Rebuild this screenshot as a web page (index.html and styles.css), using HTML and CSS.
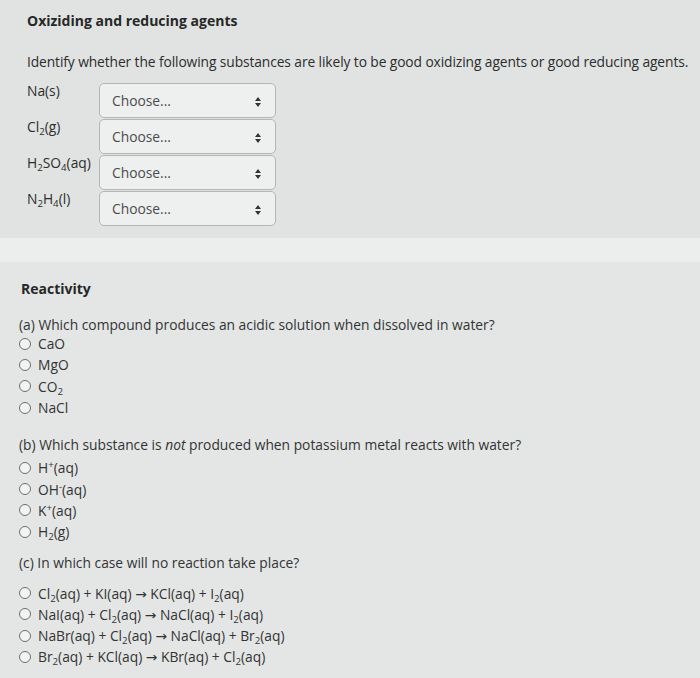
FILE: index.html
```html
<!DOCTYPE html>
<html>
<head>
<meta charset="utf-8">
<link rel="stylesheet" href="styles.css">
</head>
<body>
<section class="panel top">
  <h1 class="title">Oxiziding and reducing agents</h1>
  <p class="intro">Identify whether the following substances are likely to be good oxidizing agents or good reducing agents.</p>
  <div class="rows">
    <div class="row"><span class="label">Na(s)</span><div class="select"><span>Choose...</span><svg class="arr" width="6" height="10" viewBox="0 0 6 10"><path d="M3 0L6 4H0Z M3 10L6 6H0Z" fill="#333"/></svg></div></div>
    <div class="row"><span class="label">Cl<sub>2</sub>(g)</span><div class="select"><span>Choose...</span><svg class="arr" width="6" height="10" viewBox="0 0 6 10"><path d="M3 0L6 4H0Z M3 10L6 6H0Z" fill="#333"/></svg></div></div>
    <div class="row"><span class="label">H<sub>2</sub>SO<sub>4</sub>(aq)</span><div class="select"><span>Choose...</span><svg class="arr" width="6" height="10" viewBox="0 0 6 10"><path d="M3 0L6 4H0Z M3 10L6 6H0Z" fill="#333"/></svg></div></div>
    <div class="row"><span class="label">N<sub>2</sub>H<sub>4</sub>(l)</span><div class="select"><span>Choose...</span><svg class="arr" width="6" height="10" viewBox="0 0 6 10"><path d="M3 0L6 4H0Z M3 10L6 6H0Z" fill="#333"/></svg></div></div>
  </div>
</section>
<section class="panel bottom">
  <h2 class="heading">Reactivity</h2>
  <p class="q qa">(a) Which compound produces an acidic solution when dissolved in water?</p>
  <ul class="opts oa">
    <li><span class="radio"></span><span class="txt">CaO</span></li>
    <li><span class="radio"></span><span class="txt">MgO</span></li>
    <li><span class="radio"></span><span class="txt">CO<sub>2</sub></span></li>
    <li><span class="radio"></span><span class="txt">NaCl</span></li>
  </ul>
  <p class="q qb">(b) Which substance is <em>not</em> produced when potassium metal reacts with water?</p>
  <ul class="opts ob">
    <li><span class="radio"></span><span class="txt">H<sup>+</sup>(aq)</span></li>
    <li><span class="radio"></span><span class="txt">OH<sup>-</sup>(aq)</span></li>
    <li><span class="radio"></span><span class="txt">K<sup>+</sup>(aq)</span></li>
    <li><span class="radio"></span><span class="txt">H<sub>2</sub>(g)</span></li>
  </ul>
  <p class="q qc">(c) In which case will no reaction take place?</p>
  <ul class="opts oc">
    <li><span class="radio"></span><span class="txt">Cl<sub>2</sub>(aq) + KI(aq) &rarr; KCl(aq) + I<sub>2</sub>(aq)</span></li>
    <li><span class="radio"></span><span class="txt">NaI(aq) + Cl<sub>2</sub>(aq) &rarr; NaCl(aq) + I<sub>2</sub>(aq)</span></li>
    <li><span class="radio"></span><span class="txt">NaBr(aq) + Cl<sub>2</sub>(aq) &rarr; NaCl(aq) + Br<sub>2</sub>(aq)</span></li>
    <li><span class="radio"></span><span class="txt">Br<sub>2</sub>(aq) + KCl(aq) &rarr; KBr(aq) + Cl<sub>2</sub>(aq)</span></li>
  </ul>
</section>
</body>
</html>
```
FILE: styles.css
```css
* { box-sizing: border-box; }
html, body { margin: 0; padding: 0; }
body {
  width: 700px;
  height: 678px;
  overflow: hidden;
  background: #eceeed;
  font-family: "Open Sans", "DejaVu Sans", sans-serif;
  font-size: 13.8px;
  color: #2b2d2c;
}
sub, sup { font-size: 0.7em; line-height: 0; }
sub { vertical-align: -0.3em; }
sup { vertical-align: 0.55em; }
.panel { margin: 0; }
.top {
  background: #e0e3e2;
  height: 238px;
  padding: 11px 0 0 27px;
}
.title {
  margin: 0;
  font-size: 14px;
  font-weight: 700;
  line-height: 20px;
  color: #262827;
}
.intro {
  margin: 21px 0 0;
  line-height: 20px;
  letter-spacing: -0.1px;
}
.rows {
  margin-top: 11px;
  display: flex;
  flex-direction: column;
  gap: 1px;
}
.row {
  display: flex;
  align-items: flex-start;
}
.label {
  width: 72px;
  line-height: 12px;
  padding-top: 2px;
}
.select {
  width: 177px;
  height: 35px;
  border: 1px solid #b3b6b5;
  border-radius: 5px;
  background: #eef0ef;
  display: flex;
  align-items: center;
  justify-content: space-between;
  padding: 0 14px 0 12px;
  color: #4a4c4b;
  font-size: 13.8px;
}
.arr { margin-top: 2px; }
.bottom {
  margin-top: 24px;
  background: #e4e6e5;
  height: 416px;
  padding: 17px 0 0 19px;
  color: #323433;
}
.heading {
  margin: 0 0 0 2px;
  font-size: 14px;
  font-weight: 700;
  line-height: 20px;
  color: #262827;
}
.q { margin: 0; line-height: 18px; }
.qa { margin-top: 17px; }
.qb { margin-top: 18px; }
.qc { margin-top: 12px; }
.opts {
  list-style: none;
  margin: 0;
  padding: 0;
}
.opts li {
  display: flex;
  align-items: center;
  height: 21.3px;
}
.txt { line-height: 21px; }
.oa { margin-top: -1px; }
.ob { margin-top: 3px; }
.oc { margin-top: 10px; }
.radio {
  width: 12px;
  height: 12px;
  border: 1px solid #6d706f;
  border-radius: 50%;
  background: #f2f3f3;
  margin-right: 7px;
  flex: none;
}
```
